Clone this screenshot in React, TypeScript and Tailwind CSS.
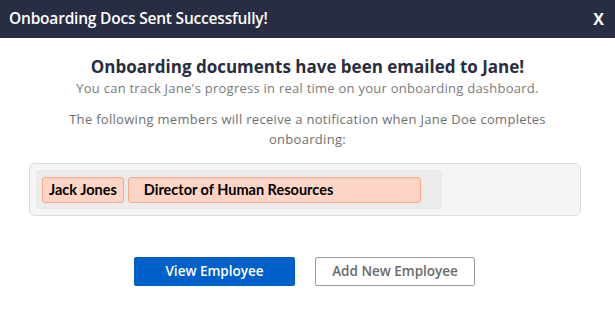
export default function App() {
  return (
    <div className="w-[615px] h-[313px] bg-white flex flex-col" style={{ fontFamily: "'Open Sans', 'Liberation Sans', sans-serif" }}>
      <div className="h-[38px] bg-[#292d43] flex items-center justify-between pl-[9px] pr-[11px]">
        <h1 className="text-white text-[15.5px] font-semibold tracking-[-0.2px]">Onboarding Docs Sent Successfully!</h1>
        <button className="text-white text-[16px] font-bold">X</button>
      </div>
      <div className="flex flex-col items-center pt-[17px]">
        <h2 className="text-[#2a2d42] text-[17px] font-bold leading-[24px] tracking-[0px]">Onboarding documents have been emailed to Jane!</h2>
        <p className="text-[#7a7a7a] text-[13px] leading-[18px] tracking-[0.25px]">You can track Jane's progress in real time on your onboarding dashboard.</p>
        <p className="text-[#6f6f6f] text-[13px] leading-[20px] text-center w-[500px] mt-[12px] tracking-[0.3px]">
          The following members will receive a notification when Jane Doe completes onboarding:
        </p>
      </div>
      <div className="mx-[29px] w-[552px] mt-[14px] h-[53px] border border-[#dcdcdc] rounded-[6px] bg-[#f5f5f5] p-[6px]">
        <div className="w-[406px] h-[39px] bg-[#ebebeb] rounded-[2px] flex items-center gap-[4px] px-[6px]">
          <span className="h-[26px] px-[6px] flex items-center bg-[#fed5c4] border border-[#f6a689] rounded-[3px] text-[14.5px] font-bold text-black" style={{ fontFamily: "Lato, 'Liberation Sans', sans-serif" }}>Jack Jones</span>
          <span className="h-[26px] w-[293px] pl-[15px] flex items-center bg-[#fed5c4] border border-[#f6a689] rounded-[3px] text-[14.5px] font-bold text-black" style={{ fontFamily: "Lato, 'Liberation Sans', sans-serif" }}>Director of Human Resources</span>
        </div>
      </div>
      <div className="flex justify-center gap-[20px] mt-[41px] pr-[6px]">
        <button className="w-[161px] h-[29px] bg-[#0060c9] rounded-[2px] text-white text-[13.5px] font-semibold">View Employee</button>
        <button className="w-[160px] h-[29px] border border-[#9a9a9a] rounded-[2px] text-[#6a6a6a] text-[13.5px] font-semibold">Add New Employee</button>
      </div>
    </div>
  );
}
